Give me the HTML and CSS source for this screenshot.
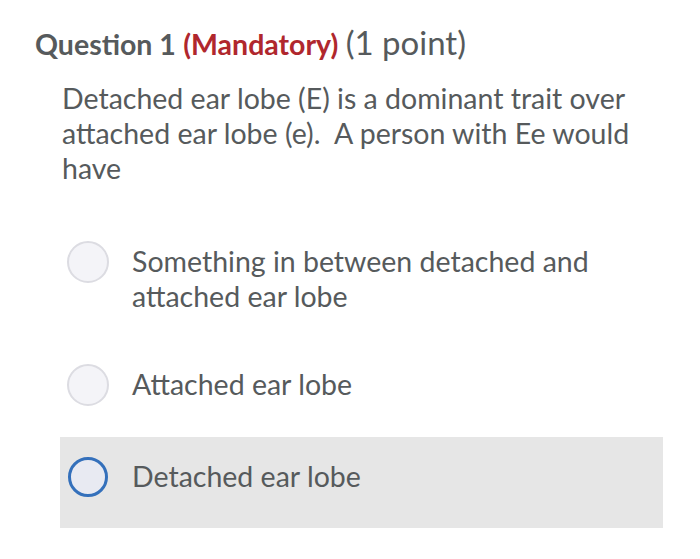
FILE: index.html
```html
<!DOCTYPE html>
<html>
<head>
<meta charset="utf-8">
<link rel="stylesheet" href="styles.css">
</head>
<body>
<div class="question">
  <h2 class="q-title"><span class="q-num">Question 1</span> <span class="q-mand">(Mandatory)</span> <span class="q-pts">(1 point)</span></h2>
  <p class="q-text">Detached ear lobe (E) is a dominant trait over attached ear lobe (e).&nbsp; A person with Ee would have</p>
  <div class="options">
    <label class="option">
      <span class="radio"></span>
      <span class="opt-text">Something in between detached and attached ear lobe</span>
    </label>
    <label class="option">
      <span class="radio"></span>
      <span class="opt-text">Attached ear lobe</span>
    </label>
    <label class="option selected">
      <span class="radio"></span>
      <span class="opt-text">Detached ear lobe</span>
    </label>
  </div>
</div>
</body>
</html>
```
FILE: styles.css
```css
html, body {
  margin: 0;
  padding: 0;
  background: #ffffff;
}
body {
  font-family: Lato, "Open Sans", sans-serif;
  color: #565a5c;
}
.question {
  padding: 26px 0 0 0;
}
.q-title {
  margin: 0;
  padding-left: 35px;
  font-size: 28.5px;
  line-height: 36px;
  font-weight: 400;
}
.q-num {
  font-weight: 700;
}
.q-mand {
  font-weight: 700;
  color: #b0272d;
}
.q-pts {
  font-weight: 400;
  font-size: 33px;
  line-height: 28px;
}
.q-text {
  margin: 19px 0 0 0;
  padding-left: 62px;
  width: 585px;
  font-size: 28.5px;
  line-height: 35px;
}
.options {
  margin: 36px 0 0 60px;
  width: 603px;
  display: flex;
  flex-direction: column;
}
.option {
  display: flex;
  align-items: flex-start;
  gap: 23px;
  padding: 22px 0 31px 7px;
  font-size: 28.5px;
  line-height: 35px;
}
.option.selected {
  background: #e6e6e6;
}
.radio {
  flex: none;
  width: 38px;
  height: 38px;
  border-radius: 50%;
  border: 2px solid #dcdce2;
  background: #f4f4f8;
  margin-top: -3px;
}
.selected .radio {
  width: 34px;
  height: 34px;
  border: 3px solid #3470bb;
  background: #e8eaf2;
  margin-top: -2px;
  margin-left: 1px;
  margin-right: 1px;
}
.opt-text {
  flex: 1;
  padding-right: 40px;
}
```
